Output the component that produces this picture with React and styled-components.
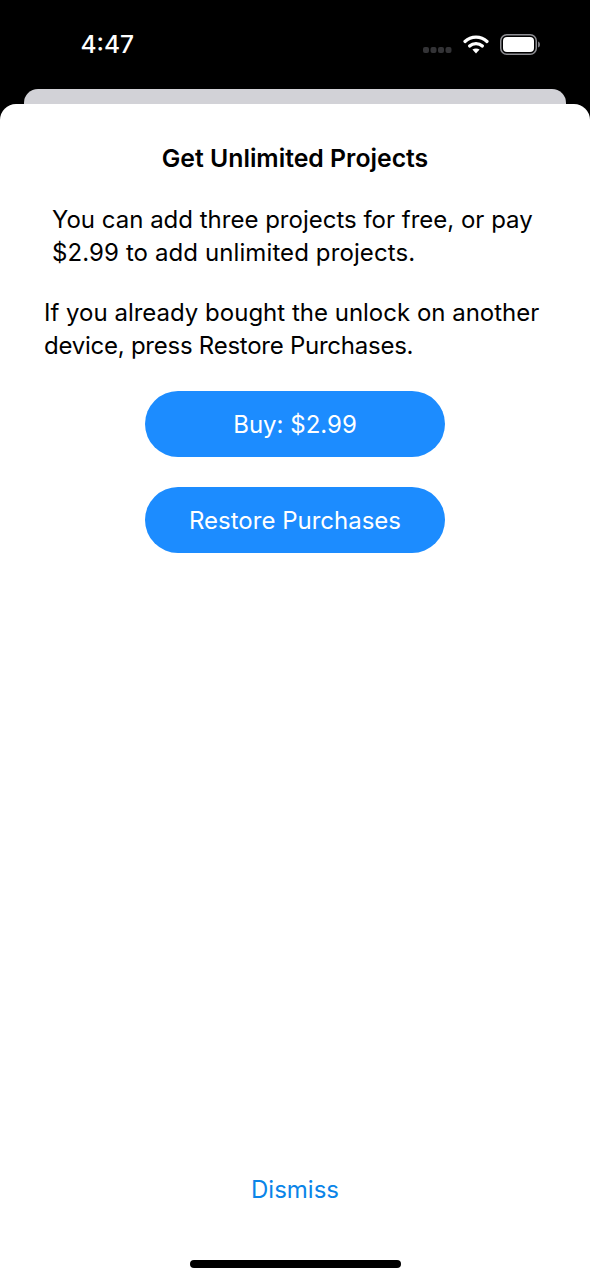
import React from "react";
import styled, { createGlobalStyle } from "styled-components";

const Global = createGlobalStyle`
  html, body { margin: 0; padding: 0; background: #000; }
  body { font-family: Inter, "Liberation Sans", sans-serif; -webkit-font-smoothing: antialiased; }
`;

const Screen = styled.div`
  width: 590px;
  height: 1280px;
  background: #000;
  display: flex;
  flex-direction: column;
  overflow: hidden;
`;

const StatusBar = styled.div`
  height: 89px;
  flex: none;
  box-sizing: border-box;
  padding: 27px 49px 0 80.5px;
  display: flex;
  justify-content: space-between;
  align-items: flex-start;
`;

const Clock = styled.div`
  color: #fff;
  font-size: 24.5px;
  font-weight: 500;
  line-height: 33px;
  margin-top: 1px;
`;

const StatusIcons = styled.div`
  display: flex;
  align-items: center;
  gap: 11px;
  height: 34px;
`;

const BehindSheet = styled.div`
  flex: none;
  height: 15px;
  margin: 0 24px;
  background: #d2d2d7;
  border-radius: 14px 14px 0 0;
`;

const Sheet = styled.div`
  flex: 1;
  background: #fff;
  border-radius: 16px 16px 0 0;
  display: flex;
  flex-direction: column;
  align-items: stretch;
  position: relative;
  box-sizing: border-box;
  padding-top: 39px;
`;

const Title = styled.h1`
  margin: 0;
  text-align: center;
  color: #000;
  font-size: 24.8px;
  font-weight: 600;
  line-height: 30px;
`;

const Paragraph = styled.p`
  margin: ${(p) => p.$top}px 0 0 ${(p) => p.$left}px;
  color: #000;
  font-size: 24px;
  font-weight: 400;
  line-height: 33px;
  white-space: nowrap;
`;

const Line = styled.span`
  display: block;
  letter-spacing: ${(p) => p.$tracking || 0}px;
`;

const Actions = styled.div`
  margin-top: 29px;
  display: flex;
  flex-direction: column;
  align-items: center;
  gap: 30px;
`;

const PillButton = styled.button`
  width: 300px;
  height: 66px;
  border: 0;
  border-radius: 33px;
  background: #1c8cff;
  color: #fff;
  font-family: inherit;
  font-size: 24px;
  font-weight: 400;
  padding: 0;
`;

const Spacer = styled.div`
  flex: 1;
`;

const Dismiss = styled.button`
  align-self: center;
  border: 0;
  background: none;
  padding: 0;
  color: #0a84e8;
  font-family: inherit;
  font-size: 24px;
  line-height: 30px;
  margin-bottom: 75px;
`;

const HomeIndicator = styled.div`
  position: absolute;
  left: 190px;
  bottom: 12px;
  width: 211px;
  height: 8px;
  border-radius: 4px;
  background: #000;
`;

const Signal = () => (
  <svg width="30" height="8" viewBox="0 0 30 8" style={{ marginTop: 12 }}>
    {[1, 8.5, 16, 23.5].map((x) => (
      <rect key={x} x={x} y="1" width="6" height="6" rx="2" fill="#333336" />
    ))}
  </svg>
);

const Wifi = () => (
  <svg width="26" height="20" viewBox="0 0 26 20" fill="none">
    <path d="M2 7.5C8 1.7 18 1.7 24 7.5" stroke="#fff" strokeWidth="3.2" strokeLinecap="round" />
    <path d="M6.6 12C10.2 8.7 15.8 8.7 19.4 12" stroke="#fff" strokeWidth="3.2" strokeLinecap="round" />
    <path d="M13 19.5L9.4 15.6C11.5 14 14.5 14 16.6 15.6Z" fill="#fff" />
  </svg>
);

const Battery = () => (
  <svg width="41" height="21" viewBox="0 0 41 21" fill="none">
    <rect x="0.75" y="0.75" width="35.5" height="19.5" rx="6" stroke="#8e8e93" strokeWidth="1.5" />
    <rect x="3" y="3" width="31" height="15" rx="4" fill="#fff" />
    <path d="M38 7.5C39.5 8 40 9 40 10.5S39.5 13 38 13.5Z" fill="#77777c" />
  </svg>
);

export default function App() {
  return (
    <Screen>
      <Global />
      <StatusBar>
        <Clock>4:47</Clock>
        <StatusIcons>
          <Signal />
          <Wifi />
          <Battery />
        </StatusIcons>
      </StatusBar>
      <BehindSheet />
      <Sheet>
        <Title>Get Unlimited Projects</Title>
        <Paragraph $top={30} $left={52}>
          <Line>You can add three projects for free, or pay</Line>
          <Line $tracking={0.1}>$2.99 to add unlimited projects.</Line>
        </Paragraph>
        <Paragraph $top={27} $left={44}>
          <Line>If you already bought the unlock on another</Line>
          <Line $tracking={-0.25}>device, press Restore Purchases.</Line>
        </Paragraph>
        <Actions>
          <PillButton>Buy: $2.99</PillButton>
          <PillButton>Restore Purchases</PillButton>
        </Actions>
        <Spacer />
        <Dismiss>Dismiss</Dismiss>
        <HomeIndicator />
      </Sheet>
    </Screen>
  );
}
